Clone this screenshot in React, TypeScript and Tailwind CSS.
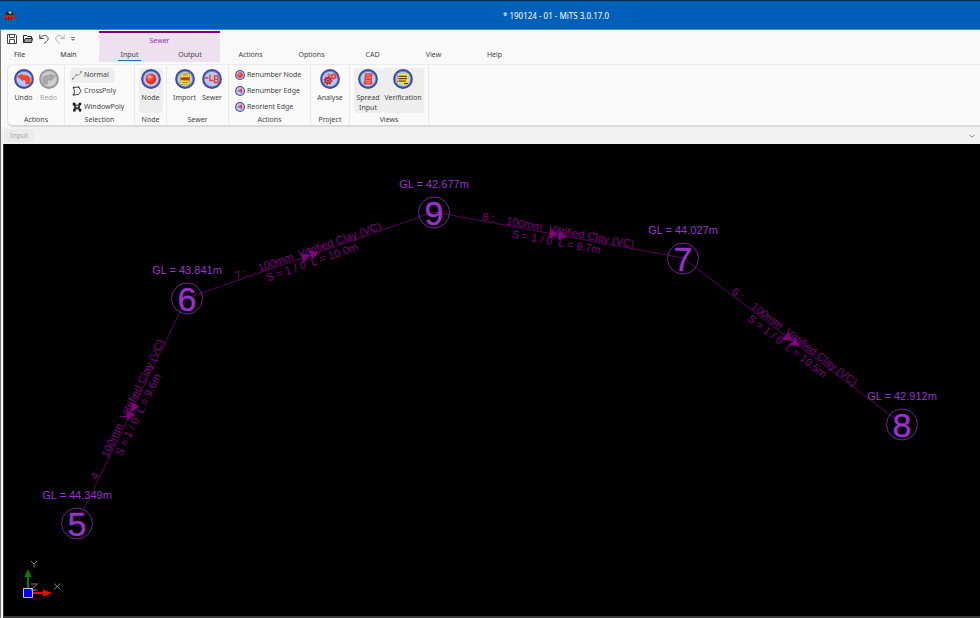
import type { ReactNode } from "react";

const FONT = "font-['Noto_Sans','Open_Sans',sans-serif]";

/* ---------- ribbon icons ---------- */

type GlyphName = "undo" | "redo" | "node" | "import" | "sewer" | "reorient" | "analyse" | "spread" | "verify";

const glyphs: Record<GlyphName, ReactNode> = {
  undo: <path d="M3.500 7.200 8.500 5v1.400c4-.8 7.200.6 8 3.800L15.500 15H11.500c.8-3-.2-4.500-3-4.300V12z" fill="#f5472c" stroke="#d8341f" strokeWidth=".4" />,
  redo: <path d="M16.500 7.200 11.500 5v1.400c-4-.8-7.200.6-8 3.800L4.500 15H8.500c-.8-3 .2-4.500 3-4.300V12z" fill="#a9a9a9" stroke="#8c8c8c" strokeWidth=".5" />,
  node: (
    <>
      <circle cx="10" cy="10" r="5.400" fill="#ee2f1e" />
      <circle cx="9.200" cy="8.800" r="3.400" fill="#fb5a45" />
      <ellipse cx="8.700" cy="7.800" rx="1.900" ry="1.400" fill="#ffab98" />
    </>
  ),
  import: (
    <>
      <path d="M6 4.500h8.500V15.500H5.500z" fill="#f4e81c" stroke="#a08c14" strokeWidth=".5" />
      <path d="M8 6h5M7 13.500h6" stroke="#8a7a14" strokeWidth=".8" />
      <path d="M4.500 9.500 8 8.300h6.500v3.200H8z" fill="#e22518" />
    </>
  ),
  sewer: <path d="M3 9h3.500M8 5.500v6h3.500M12.500 7h3.500v6.500H12.500zM12.500 10.200h3.500" fill="none" stroke="#ee3b30" strokeWidth="1.300" />,
  reorient: (
    <>
      <path d="M4 10h6M12 5v10" stroke="#8c6fa8" strokeWidth="1.400" />
      <path d="m5 9.500 9-4.500v10l-3-3.500z" fill="#ee3f36" />
    </>
  ),
  analyse: (
    <>
      <circle cx="8" cy="11.500" r="2.500" fill="none" stroke="#d8241c" strokeWidth="1.800" />
      <circle cx="8" cy="11.500" r="3.900" fill="none" stroke="#a82020" strokeWidth="1.200" strokeDasharray="1.500 1.500" />
      <circle cx="8" cy="11.500" r=".9" fill="#331111" />
      <circle cx="13.500" cy="7.500" r="1.900" fill="none" stroke="#ee4238" strokeWidth="1.600" />
      <circle cx="13.500" cy="7.500" r="3" fill="none" stroke="#ee4238" strokeWidth=".8" strokeDasharray="1.100 1" />
      <circle cx="9" cy="6" r="1.200" fill="none" stroke="#ee4238" strokeWidth="1" />
    </>
  ),
  spread: (
    <>
      <path d="m7 4.500 7.500-.3-.7 6 .8 5.300H5.500l1-5.500z" fill="#ef3d35" />
      <path d="m8.500 6.500 4-.5M8 9l4.800-.6M7.500 11.500l5 .2M8 13.500h4.500" stroke="#ffb4b4" strokeWidth=".7" />
    </>
  ),
  verify: (
    <>
      <path d="M5 5h10.500v10L13 16l-7.500-1.500z" fill="#f7e91c" />
      <path d="M6 7.300h8M6 9.700h8M6 12.100h7M11 14.500h4" stroke="#222" strokeWidth="1" />
      <path d="M4.300 7.300h1.500M4.300 9.700h1.500M4.300 12.100h1.500" stroke="#d22" strokeWidth="1" />
    </>
  ),
};

function RoundIcon({ name, small = false }: { name: GlyphName; small?: boolean }) {
  const grey = name === "redo";
  return (
    <svg viewBox="0 0 20 20" className={small ? "size-2.5 shrink-0" : "size-5 shrink-0"} aria-hidden="true">
      <circle cx="10" cy="10" r="9.900" fill={grey ? "#969696" : "#3b499e"} />
      <circle cx="10" cy="10" r="8.300" fill={grey ? "#b9b9b9" : "#6c80cf"} />
      <circle cx="10" cy="10" r="7.300" fill={grey ? "#cfcfcf" : "#b9c8f3"} />
      {glyphs[name]}
    </svg>
  );
}

const NormalIcon = () => (
  <svg viewBox="0 0 10 10" className="size-2.5 shrink-0" aria-hidden="true">
    <path d="M.8 8.500c2-.2 1.700-3.500 4-3.500S7.500 5 9 2" fill="none" stroke="#777" strokeWidth=".7" />
    <path d="M0 8h1.500v1.500H0zM8.500 1H10v1.500H8.500zM4 4.300h1.200v1.200H4z" fill="#777" />
  </svg>
);

const CrossPolyIcon = () => (
  <svg viewBox="0 0 10 10" className="size-2.5 shrink-0" aria-hidden="true">
    <path d="M1.500 1.500 6.500 1 9.200 5 6.500 8.500l-5 .5 1-3z" fill="none" stroke="#333" strokeWidth=".9" />
    <path d="M.8.800h1.500v1.500H.8zM.8 8h1.500v1.500H.8zM5.800.500h1.500V2H5.800z" fill="#333" />
  </svg>
);

const WindowPolyIcon = () => (
  <svg viewBox="0 0 10 10" className="size-2.5 shrink-0" aria-hidden="true">
    <path d="M2 2.500h6v5.500H2z" fill="#444" />
    <path d="M.8.800h2.600v2.600H.8zM6.800.800h2.400v2.400H6.800zM1.200 6.800h2.400v2.600H1.200zM6.800 6.800h2.400v2.600H6.800z" fill="#111" />
    <path d="M4 3.800h2v1.200H4zM4.300 7h1.500v1H4.300z" fill="#ddd" />
  </svg>
);

/* ---------- ribbon parts ---------- */

function Group({ label, className = "", children }: { label: string; className?: string; children: ReactNode }) {
  return (
    <section aria-label={label} className={`flex flex-col items-center border-r border-[#e9e9e9] pt-[3px] ${className}`}>
      <div className="flex h-[46px] w-full justify-center">{children}</div>
      <span className="leading-[11px]">{label}</span>
    </section>
  );
}

function BigButton({ icon, label, width, active = false, disabled = false }: {
  icon: GlyphName;
  label: string;
  width: string;
  active?: boolean;
  disabled?: boolean;
}) {
  return (
    <button
      type="button"
      disabled={disabled}
      className={`flex h-[45px] flex-col items-center rounded-sm pt-px ${width} ${active ? "bg-[#eeeeee]" : ""} ${disabled ? "text-[#a3a3a3]" : ""}`}
    >
      <RoundIcon name={icon} />
      <span className="mt-[4px] leading-[10px]">{label}</span>
    </button>
  );
}

function SmallButton({ icon, label, active = false }: { icon: ReactNode; label: string; active?: boolean }) {
  return (
    <button type="button" className={`flex h-[15px] items-center gap-[2px] rounded-sm pl-[2px] ${active ? "bg-[#eeeeee] pr-1.5" : ""}`}>
      {icon}
      <span className="leading-[10px] whitespace-nowrap">{label}</span>
    </button>
  );
}

function Tab({ label, width = "w-[61px]", active = false }: { label: string; width?: string; active?: boolean }) {
  return (
    <button type="button" role="tab" aria-selected={active} className={`flex h-4 flex-col items-center ${width}`}>
      <span className="pt-[4px] leading-[10px]">{label}</span>
      {active && <span className="h-px w-[23px] shrink-0 bg-[#1f6fd0]" />}
    </button>
  );
}

function QuickAccess() {
  return (
    <div className="flex h-[18px] items-center gap-[6px] pl-[6px] text-[#444]">
      <button type="button" aria-label="Save">
        <svg viewBox="0 0 10 10" className="size-2.5" fill="none" stroke="currentColor">
          <path d="M.5.500h8l1 1v8h-9zM2.500.500v3h5v-3M2.500 9.500v-4h5v4" />
        </svg>
      </button>
      <button type="button" aria-label="Open">
        <svg viewBox="0 0 10 10" className="size-2.5" fill="none" stroke="#222">
          <path d="M.5 8.500v-7h3l1 1h4V4" />
          <path d="M2.300 4.500h7.200l-1 4h-8z" fill="#999" />
        </svg>
      </button>
      <button type="button" aria-label="Undo">
        <svg viewBox="0 0 10 10" className="size-2.5" fill="none" stroke="currentColor">
          <path d="M.8.500v4h4M1 4.300C3 1.800 6 .600 8 2.300s1.200 3.800-.5 5.200L5 9.500" />
        </svg>
      </button>
      <button type="button" aria-label="Redo" disabled className="text-[#b0b0b0]">
        <svg viewBox="0 0 10 10" className="size-2.5" fill="none" stroke="currentColor">
          <path d="M9.200.500v4h-4M9 4.300C7 1.800 4 .600 2 2.300S.8 6.100 2.500 7.500L5 9.500" />
        </svg>
      </button>
      <button type="button" aria-label="Customise quick access">
        <svg viewBox="0 0 4 6" className="h-[6px] w-1" fill="#777">
          <path d="M0 1h4v1H0zM0 3h4L2 5z" />
        </svg>
      </button>
    </div>
  );
}

/* ---------- drawing ---------- */

type Point = { id: number; x: number; y: number; gl: string };

const nodes: Point[] = [
  { id: 5, x: 77, y: 523, gl: "44.349m" },
  { id: 6, x: 187, y: 298, gl: "43.841m" },
  { id: 9, x: 434, y: 212, gl: "42.677m" },
  { id: 7, x: 683, y: 258, gl: "44.027m" },
  { id: 8, x: 902, y: 424, gl: "42.912m" },
];

const edges = [
  { id: 4, from: 0, to: 1, length: "9.6m", reversed: true },
  { id: 7, from: 1, to: 2, length: "10.0m", reversed: false },
  { id: 8, from: 2, to: 3, length: "9.7m", reversed: false },
  { id: 6, from: 3, to: 4, length: "10.5m", reversed: false },
];

function Edge({ edge }: { edge: (typeof edges)[number] }) {
  const a = nodes[edge.from];
  const b = nodes[edge.to];
  const angle = (Math.atan2(b.y - a.y, b.x - a.x) * 180) / Math.PI;
  return (
    <>
      <line x1={a.x} y1={a.y} x2={b.x} y2={b.y} stroke="#5c005c" />
      <g transform={`translate(${(a.x + b.x) / 2} ${(a.y + b.y) / 2}) rotate(${angle})`} fill="#800080">
        <text x="-1" y="-1" textAnchor="middle" className="whitespace-pre">{`${edge.id} :    100mm  Vitrified Clay (VC)`}</text>
        <text x="-1" y="11" textAnchor="middle" className="whitespace-pre">{`S = 1 / 0  L = ${edge.length}`}</text>
        {/* flow direction */}
        <path d={edge.reversed ? "M-2-5v10L-11 0zM7-5v10L-2 0z" : "M-9-5v10L0 0zM0-5v10L9 0z"} />
      </g>
    </>
  );
}

function Drawing() {
  return (
    <svg
      viewBox="4 144 976 472"
      className="block h-full w-full font-['Liberation_Sans',Arial,sans-serif] text-[11px]"
      role="img"
      aria-label="Sewer network plan"
    >
      {edges.map((edge) => (
        <Edge key={edge.id} edge={edge} />
      ))}
      {nodes.map((n) => (
        <g key={n.id} fill="#9932cc" textAnchor="middle">
          <circle cx={n.x} cy={n.y + 0.5} r="15.500" fill="none" stroke="#6e2494" />
          <text x={n.x} y={n.y + 13} stroke="#9932cc" strokeWidth=".4" className="text-[34px]">{n.id}</text>
          <text x={n.x} y={n.y - 24}>{`GL = ${n.gl}`}</text>
        </g>
      ))}
      {/* UCS axes */}
      <path d="M28 588v-12" stroke="#008000" strokeWidth="2" />
      <path d="M28 569l-3.500 8h7z" fill="#008000" />
      <path d="M32 593h12" stroke="#f00" strokeWidth="2" />
      <path d="M52 593l-9-3.500v7z" fill="#f00" />
      <path d="M23.500 588.500h9v9h-9z" fill="#00f" stroke="#c8c8c8" />
      <path d="M31 561l3 3 3-3M34 564v3.500M31 584h6.500l-6.500 6h6.500M54 583.500l6.500 6M60.500 583.500l-6.500 6" fill="none" stroke="#a0a0a0" strokeWidth=".8" />
    </svg>
  );
}

export default function App() {
  return (
    <div className={`flex min-h-screen flex-col bg-[#f9f9f9] text-[7px] text-[#444] ${FONT}`}>
      <header className="flex h-[30px] items-center border-t border-b border-t-[#06294c] border-b-[#4b8bd0] bg-[#005fb8] pl-1 text-white">
        <svg viewBox="0 0 11 11" className="size-[11px]" aria-hidden="true">
          <path d="M1 5.500C2 2 4 .500 6 1s3.500 2 4 4.500z" fill="#1b2a24" />
          <path d="M4 2l2-1 2 2-2 1z" fill="#8fd3c0" />
          <path d="M0 5h11v5H0z" fill="#c81e2b" />
          <path d="M2 10V7M4.500 10V7M7 10V7" stroke="#5b1430" />
        </svg>
        <h1 className="flex-1 pt-[2px] pl-[117px] text-center text-[8px]">* 190124 - 01 - MiTS 3.0.17.0</h1>
      </header>

      <div className="flex flex-1 flex-col border-l border-[#777]">
        <nav role="tablist" aria-label="Ribbon tabs" className="flex h-8 items-end pt-px">
          <div className="flex h-full w-[98px] flex-col justify-between">
            <QuickAccess />
            <div className="flex text-[#333]">
              <Tab label="File" width="w-[37px]" />
              <Tab label="Main" />
            </div>
          </div>
          <div className="flex h-full flex-col justify-between border-t-2 border-[#800080] bg-[#eee0ef]">
            <span className="pt-[2px] text-center leading-[11px] text-[#a030a8]">Sewer</span>
            <div className="flex">
              <Tab label="Input" active />
              <Tab label="Output" width="w-[60px]" />
            </div>
          </div>
          {["Actions", "Options", "CAD", "View", "Help"].map((label) => (
            <Tab key={label} label={label} />
          ))}
        </nav>

        <div className="mt-[2px] ml-1.5 flex h-[63px] rounded-l-md border-t border-b-2 border-l border-t-[#ebebeb] border-b-[#dadada] border-l-[#e4e4e4] bg-[#fafafa]">
          <Group label="Actions" className="w-[57px]">
            <BigButton icon="undo" label="Undo" width="w-[25px]" />
            <BigButton icon="redo" label="Redo" width="w-[25px]" disabled />
          </Group>
          <Group label="Selection" className="w-[70px]">
            <div className="flex w-full flex-col items-start gap-px pl-[5px]">
              <SmallButton icon={<NormalIcon />} label="Normal" active />
              <SmallButton icon={<CrossPolyIcon />} label="CrossPoly" />
              <SmallButton icon={<WindowPolyIcon />} label="WindowPoly" />
            </div>
          </Group>
          <Group label="Node" className="w-8">
            <BigButton icon="node" label="Node" width="w-6" active />
          </Group>
          <Group label="Sewer" className="w-[62px]">
            <BigButton icon="import" label="Import" width="w-[29px]" />
            <BigButton icon="sewer" label="Sewer" width="w-[26px]" />
          </Group>
          <Group label="Actions" className="w-[82px]">
            <div className="flex w-full flex-col items-start gap-px pl-1">
              <SmallButton icon={<RoundIcon name="node" small />} label="Renumber Node" />
              <SmallButton icon={<RoundIcon name="reorient" small />} label="Renumber Edge" />
              <SmallButton icon={<RoundIcon name="reorient" small />} label="Reorient Edge" />
            </div>
          </Group>
          <Group label="Project" className="w-[39px]">
            <BigButton icon="analyse" label="Analyse" width="w-[34px]" />
          </Group>
          <Group label="Views" className="w-[79px]">
            <BigButton icon="spread" label="Spread Input" width="w-7" active />
            <BigButton icon="verify" label="Verification" width="w-[42px]" active />
          </Group>
        </div>

        <div className="flex h-[17px] items-center justify-between bg-[#f2f2f2] pr-1">
          <button type="button" className="ml-[3px] h-[13px] w-[30px] rounded-sm bg-[#ebebeb] pt-[2px] text-[#a8a8a8]">
            Input
          </button>
          <button type="button" aria-label="Open documents" className="text-[#888]">
            <svg viewBox="0 0 8 6" className="h-1.5 w-2" fill="none" stroke="currentColor">
              <path d="M1.500 2 4 4.200 6.500 2" />
            </svg>
          </button>
        </div>

        <main className="ml-[2px] flex-1 border-b-2 border-l border-[#3a3a3a] bg-black">
          <Drawing />
        </main>
      </div>
    </div>
  );
}
